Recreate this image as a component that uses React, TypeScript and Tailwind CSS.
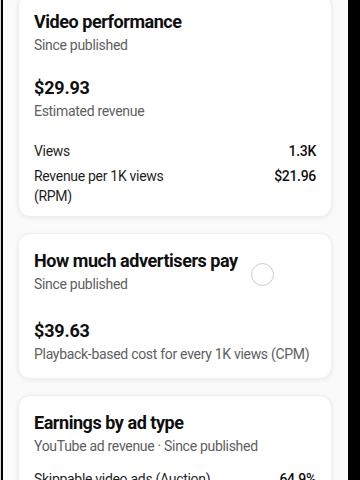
import { ReactNode } from 'react';

// Roboto everywhere, like the Studio app
const font = { fontFamily: 'Roboto, "Noto Sans", sans-serif' };

function Card({ children, className = '' }: { children: ReactNode; className?: string }) {
  return (
    <div
      className={`relative rounded-xl border border-[#efefef] bg-white px-[15px] pt-[15px] shadow-[0_1px_4px_rgba(0,0,0,0.08)] ${className}`}
    >
      {children}
    </div>
  );
}

function CardHead({ title, sub }: { title: string; sub: string }) {
  return (
    <>
      <h2 className="text-[18px] leading-[24px] font-bold tracking-[-0.45px] text-[#0f0f0f]">{title}</h2>
      <p className="mt-px text-[14px] leading-[20px] tracking-[-0.3px] text-[#606060]">{sub}</p>
    </>
  );
}

function Amount({ value, label, className = 'mt-[21px]' }: { value: string; label: string; className?: string }) {
  return (
    <>
      <div className={`text-[18px] leading-[24px] font-bold tracking-[-0.2px] text-[#0f0f0f] ${className}`}>{value}</div>
      <div className="mt-px text-[14px] leading-[20px] tracking-[-0.3px] text-[#606060]">{label}</div>
    </>
  );
}

function Row({ label, value, className = '' }: { label: ReactNode; value: string; className?: string }) {
  return (
    <div className={`flex items-start justify-between gap-6 text-[14px] leading-[20px] tracking-[-0.3px] text-[#1f1f1f] ${className}`}>
      <span>{label}</span>
      <span className="font-medium text-[#0f0f0f]">{value}</span>
    </div>
  );
}

export default function App() {
  return (
    <div className="flex h-[480px] w-[360px] overflow-hidden bg-black" style={font}>
      <div className="w-px bg-[#d9d9d9]" />
      <div className="ml-[2px] flex w-[345px] flex-col gap-[16px] bg-[#fafafa] pl-[15px] pr-[16px]">
        {/* Video performance */}
        <Card className="-mt-[6px] pb-[10px]">
          <CardHead title="Video performance" sub="Since published" />
          <Amount value="$29.93" label="Estimated revenue" />
          <Row label="Views" value="1.3K" className="mt-[20px]" />
          <Row
            label={
              <>
                Revenue per 1K views
                <br />
                (RPM)
              </>
            }
            value="$21.96"
            className="mt-[5px]"
          />
        </Card>

        {/* How much advertisers pay */}
        <Card className="pb-[14px]">
          <CardHead title="How much advertisers pay" sub="Since published" />
          <Amount value="$39.63" label="Playback-based cost for every 1K views (CPM)" className="mt-[25px]" />
          {/* loading ring sitting over the card */}
          <span className="absolute left-[232px] top-[29px] h-[23px] w-[23px] rounded-full border-[1.5px] border-[#cbcbd6]" />
        </Card>

        {/* Earnings by ad type */}
        <Card className="pb-[14px]">
          <CardHead title="Earnings by ad type" sub="YouTube ad revenue · Since published" />
          <Row label="Skippable video ads (Auction)" value="64.9%" className="mt-[13px]" />
          <Row label="Non-skippable video ads (Auction)" value="20.1%" className="mt-[6px]" />
        </Card>
      </div>
    </div>
  );
}
